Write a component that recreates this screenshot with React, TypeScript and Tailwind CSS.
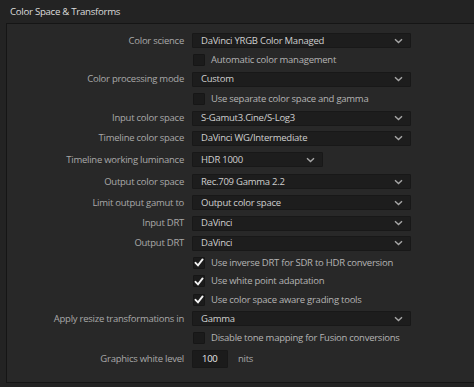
import React from 'react';

const Chevron = () => (
  <svg width="9" height="6" viewBox="0 0 9 6" className="shrink-0">
    <path d="M1 1.2 L4.5 4.6 L8 1.2" fill="none" stroke="#a6a6a6" strokeWidth="1.4" />
  </svg>
);

function SelectRow({ label, value, h, narrow }: { label: string; value: string; h: string; narrow?: boolean }) {
  return (
    <div className={`flex items-center ${h}`}>
      <div className="w-[177px] shrink-0 text-right text-[#a8a8a8]">{label}</div>
      <div
        className={`ml-[8px] flex h-[15px] items-center justify-between rounded-[1px] border border-[#181818] bg-[#1d1d1d] pl-[8px] pr-[7px] text-[#cfcfcf] ${
          narrow ? 'w-[131px]' : 'w-[219px]'
        }`}
      >
        <span>{value}</span>
        <Chevron />
      </div>
    </div>
  );
}

function CheckRow({ label, checked, h }: { label: string; checked?: boolean; h: string }) {
  return (
    <div className={`flex items-center ${h}`}>
      <div className="ml-[186px] flex h-[12px] w-[12px] items-center justify-center rounded-[1px] border border-[#161616] bg-[#1b1b1b]">
        {checked && (
          <svg width="10" height="9" viewBox="0 0 10 9">
            <path d="M1.5 4.8 L4 7.4 L8.6 1.4" fill="none" stroke="#f2f2f2" strokeWidth="1.9" strokeLinecap="round" />
          </svg>
        )}
      </div>
      <span className="ml-[6px] text-[#b4b4b4]">{label}</span>
    </div>
  );
}

export default function App() {
  return (
    <div
      className="h-[387px] w-[474px] overflow-hidden bg-[#232323] text-[9.5px] leading-none tracking-[-0.25px]"
      style={{ fontFamily: '"Open Sans", "Noto Sans", sans-serif' }}
    >
      <div className="flex h-[23px] items-center pl-[10px] text-[9.7px] tracking-[-0.3px] text-[#dcdcdc]">Color Space &amp; Transforms</div>
      <div className="ml-[6px] w-[480px] border-y border-l border-[#151515] bg-[#282828] pb-[13px] pt-[7px]">
        <SelectRow h="h-[19px]" label="Color science" value="DaVinci YRGB Color Managed" />
        <CheckRow h="h-[19px]" label="Automatic color management" />
        <SelectRow h="h-[20px]" label="Color processing mode" value="Custom" />
        <CheckRow h="h-[19px]" label="Use separate color space and gamma" />
        <SelectRow h="h-[20px]" label="Input color space" value="S-Gamut3.Cine/S-Log3" />
        <SelectRow h="h-[20px]" label="Timeline color space" value="DaVinci WG/Intermediate" />
        <SelectRow h="h-[23px]" label="Timeline working luminance" value="HDR 1000" narrow />
        <SelectRow h="h-[21px]" label="Output color space" value="Rec.709 Gamma 2.2" />
        <SelectRow h="h-[21px]" label="Limit output gamut to" value="Output color space" />
        <SelectRow h="h-[20px]" label="Input DRT" value="DaVinci" />
        <SelectRow h="h-[20px]" label="Output DRT" value="DaVinci" />
        <CheckRow h="h-[19px]" label="Use inverse DRT for SDR to HDR conversion" checked />
        <CheckRow h="h-[18px]" label="Use white point adaptation" checked />
        <CheckRow h="h-[19px]" label="Use color space aware grading tools" checked />
        <SelectRow h="h-[19px]" label="Apply resize transformations in" value="Gamma" />
        <CheckRow h="h-[20px]" label="Disable tone mapping for Fusion conversions" />
        <div className="flex h-[21px] items-center">
          <div className="w-[177px] shrink-0 text-right text-[#a8a8a8]">Graphics white level</div>
          <div className="ml-[8px] flex h-[18px] w-[36px] items-center rounded-[1px] border border-[#181818] bg-[#1b1b1b] pl-[9px] text-[#e6e6e6]">
            100
          </div>
          <span className="ml-[10px] text-[#a8a8a8]">nits</span>
        </div>
      </div>
    </div>
  );
}
